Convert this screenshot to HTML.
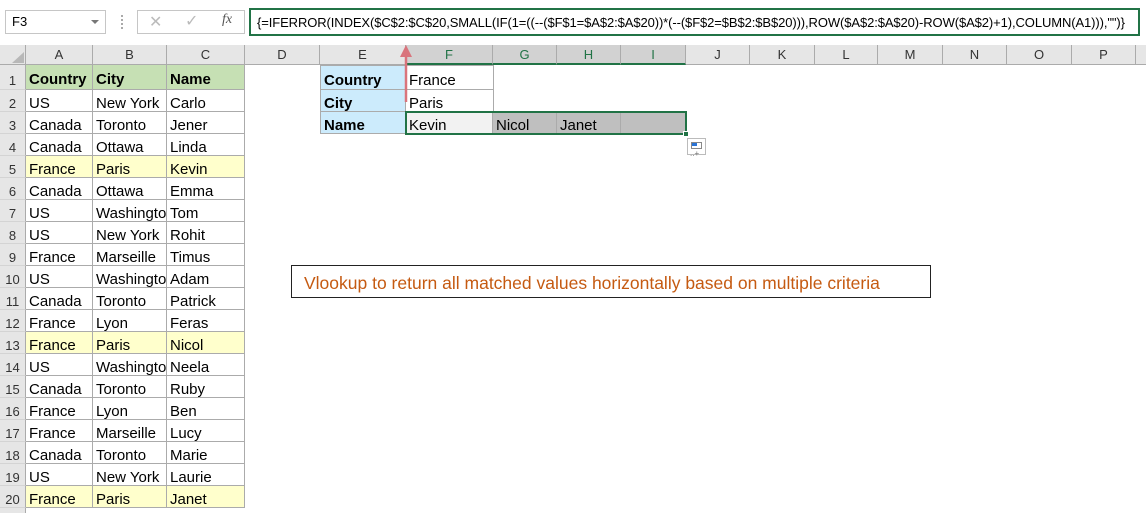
<!DOCTYPE html>
<html><head><meta charset="utf-8"><style>
*{margin:0;padding:0;box-sizing:border-box}
body{width:1146px;height:513px;background:#fff;position:relative;overflow:hidden;font-family:"Liberation Sans",Arial,sans-serif}
.a{position:absolute}
.top{left:0;top:0;width:1146px;height:45px;background:#fff}
.hdr{top:45px;height:20px;background:#e6e6e6;border-right:1px solid #ababab;border-bottom:1px solid #ababab;font-size:13px;color:#333;text-align:center;line-height:20px}
.rh{left:0;width:26px;background:#e6e6e6;border-right:1px solid #ababab;border-bottom:1px solid #d4d4d4;font-size:13px;color:#333;text-align:center}
.c{font-size:15px;color:#000;padding-left:3px;border-right:1px solid #ababab;border-bottom:1px solid #ababab;white-space:nowrap;overflow:hidden}
.b{font-weight:bold}
</style></head><body>
<div class="a top"></div>
<div class="a" style="left:5px;top:10px;width:101px;height:24px;border:1px solid #c6c6c6;font-size:13px;line-height:22px;padding-left:6px">F3<span style="position:absolute;right:6px;top:9px;border-left:4px solid transparent;border-right:4px solid transparent;border-top:4px solid #777"></span></div>
<div class="a" style="left:121px;top:15px;width:2px;height:14px;border-left:2px dotted #aaa"></div>
<div class="a" style="left:137px;top:10px;width:108px;height:24px;border:1px solid #c6c6c6"></div>
<div class="a" style="left:149px;top:12px;font-size:16px;color:#bbb">✕</div>
<div class="a" style="left:185px;top:11px;font-size:16px;color:#bbb">✓</div>
<div class="a" style="left:222px;top:12px;font-size:14px;font-style:italic;font-family:'Liberation Serif',serif;color:#555"><i>f</i>x</div>
<div class="a" style="left:249px;top:8px;width:891px;height:28px;border:2px solid #217346;font-size:13px;line-height:25px;padding-left:6px;white-space:nowrap;overflow:hidden;letter-spacing:-0.1px">{=IFERROR(INDEX($C$2:$C$20,SMALL(IF(1=((--($F$1=$A$2:$A$20))*(--($F$2=$B$2:$B$20))),ROW($A$2:$A$20)-ROW($A$2)+1),COLUMN(A1))),"")}</div>
<div class="a hdr" style="left:0;width:26px"></div>
<div class="a" style="left:12px;top:52px;border-left:12px solid transparent;border-bottom:11px solid #b8b8b8"></div>
<div class="a hdr" style="left:26px;width:67px">A</div>
<div class="a hdr" style="left:93px;width:74px">B</div>
<div class="a hdr" style="left:167px;width:78px">C</div>
<div class="a hdr" style="left:245px;width:75px">D</div>
<div class="a hdr" style="left:320px;width:86px">E</div>
<div class="a hdr" style="left:406px;width:87px;background:#d2d2d2;color:#217346;border-bottom:2px solid #217346">F</div>
<div class="a hdr" style="left:493px;width:64px;background:#d2d2d2;color:#217346;border-bottom:2px solid #217346">G</div>
<div class="a hdr" style="left:557px;width:64px;background:#d2d2d2;color:#217346;border-bottom:2px solid #217346">H</div>
<div class="a hdr" style="left:621px;width:65px;background:#d2d2d2;color:#217346;border-bottom:2px solid #217346">I</div>
<div class="a hdr" style="left:686px;width:64px">J</div>
<div class="a hdr" style="left:750px;width:65px">K</div>
<div class="a hdr" style="left:815px;width:63px">L</div>
<div class="a hdr" style="left:878px;width:65px">M</div>
<div class="a hdr" style="left:943px;width:64px">N</div>
<div class="a hdr" style="left:1007px;width:65px">O</div>
<div class="a hdr" style="left:1072px;width:64px">P</div>
<div class="a hdr" style="left:1136px;width:10px;border-right:none"></div>
<div class="a" style="left:0;top:508px;width:26px;height:5px;background:#e6e6e6;border-right:1px solid #ababab"></div>

<div id="rows"></div>
<script>
(function(){
var d=[["Country","City","Name"],["US","New York","Carlo"],["Canada","Toronto","Jener"],["Canada","Ottawa","Linda"],["France","Paris","Kevin"],["Canada","Ottawa","Emma"],["US","Washington","Tom"],["US","New York","Rohit"],["France","Marseille","Timus"],["US","Washington","Adam"],["Canada","Toronto","Patrick"],["France","Lyon","Feras"],["France","Paris","Nicol"],["US","Washington","Neela"],["Canada","Toronto","Ruby"],["France","Lyon","Ben"],["France","Marseille","Lucy"],["Canada","Toronto","Marie"],["US","New York","Laurie"],["France","Paris","Janet"]];
var xs=[26,93,167,245],h="";
for(var i=0;i<20;i++){var ty=i==0?65:90+(i-1)*22,ht=i==0?25:22;
h+='<div class="a rh" style="top:'+ty+'px;height:'+ht+'px;line-height:'+(ht+6)+'px">'+(i+1)+'</div>';
var bg=i==0?'#c6e0b4':([4,12,19].indexOf(i)>=0?'#ffffcc':'#fff');
for(var j=0;j<3;j++){h+='<div class="a c'+(i==0?' b':'')+'" style="left:'+xs[j]+'px;top:'+ty+'px;width:'+(xs[j+1]-xs[j])+'px;height:'+ht+'px;line-height:'+(ht+5)+'px;background:'+bg+'">'+d[i][j]+'</div>';}}
document.getElementById('rows').innerHTML=h;
})();
</script>
<div class="a c b" style="left:320px;top:65px;width:86px;height:25px;line-height:30px;background:#ccebfc;border-left:1px solid #ababab;border-top:1px solid #ababab">Country</div>
<div class="a c b" style="left:320px;top:90px;width:86px;height:22px;line-height:27px;background:#ccebfc;border-left:1px solid #ababab">City</div>
<div class="a c b" style="left:320px;top:112px;width:86px;height:22px;line-height:27px;background:#ccebfc;border-left:1px solid #ababab">Name</div>
<div class="a c" style="left:406px;top:65px;width:88px;height:25px;line-height:30px;border-top:1px solid #ababab">France</div>
<div class="a c" style="left:406px;top:90px;width:88px;height:22px;line-height:27px">Paris</div>
<div class="a c" style="left:406px;top:112px;width:87px;height:22px;line-height:27px;background:#f2f2f2">Kevin</div>
<div class="a c" style="left:493px;top:112px;width:64px;height:22px;line-height:27px;background:#bfbfbf">Nicol</div>
<div class="a c" style="left:557px;top:112px;width:64px;height:22px;line-height:27px;background:#bfbfbf">Janet</div>
<div class="a c" style="left:621px;top:112px;width:65px;height:22px;background:#bfbfbf"></div>
<div class="a" style="left:405px;top:111px;width:282px;height:24px;border:2px solid #217346"></div>
<div class="a" style="left:683px;top:131px;width:6px;height:6px;background:#217346;border:1px solid #fff"></div>
<div class="a" style="left:687px;top:138px;width:19px;height:17px;border:1px solid #bbb;background:#fff"><div class="a" style="left:3px;top:3px;width:6px;height:4px;background:#2a74d6"></div><div class="a" style="left:3px;top:3px;width:11px;height:7px;border:1px solid #888"></div><div class="a" style="left:2px;top:12px;font-size:8px;color:#777;line-height:6px">..+</div></div>
<svg class="a" style="left:398px;top:40px" width="16" height="64"><line x1="8" y1="62" x2="8" y2="14" stroke="#d9747c" stroke-width="2.5"/><polygon points="8,5 2,17 14,17" fill="#d9747c"/></svg>
<div class="a" style="left:291px;top:265px;width:640px;height:33px;border:1px solid #222;color:#c55a11;font-size:17.5px;line-height:35px;padding-left:12px;white-space:nowrap">Vlookup to return all matched values horizontally based on multiple criteria</div>
</body></html>
